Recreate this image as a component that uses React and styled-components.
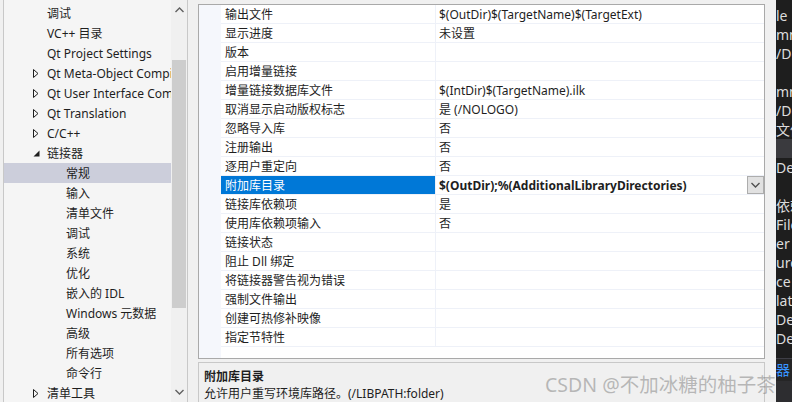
import * as React from 'react'
import styled, { createGlobalStyle } from 'styled-components'

const GlobalStyle = createGlobalStyle`
html, body { margin: 0; padding: 0; background: #f0f0f0; }
body {
  font-family: "Noto Sans", "Noto Sans CJK SC", sans-serif;
  font-size: 12px;
  color: #1e1e1e;
}
`

const Page = styled.div`
position: relative;
display: flex;
width: 792px;
height: 402px;
overflow: hidden;
background: #f0f0f0;
`

const TreePanel = styled.div`
display: flex;
margin-left: 3px;
width: 183px;
border-left: 1px solid #c8c8c8;
border-right: 1px solid #c8c8c8;
background: #f5f5f5;
`

const TreeList = styled.div`
flex: 1;
min-width: 0;
padding-top: 3px;
overflow: hidden;
`

const TreeRow = styled.div`
display: flex;
align-items: center;
height: 20px;
padding-left: ${p => (p.$level === 2 ? 62 : 29)}px;
background: ${p => (p.$selected ? '#cccedb' : 'transparent')};
white-space: nowrap;
`

const Arrow = styled.span`
display: inline-flex;
flex-shrink: 0;
width: 14px;
align-items: center;
`

const Scrollbar = styled.div`
display: flex;
flex-direction: column;
flex-shrink: 0;
width: 16px;
background: #f0f0f0;
`

const ScrollBtn = styled.div`
height: 20px;
display: flex;
align-items: center;
justify-content: center;
`

const Track = styled.div`
flex: 1;
padding: 40px 1px 74px 1px;
display: flex;
`

const Thumb = styled.div`
flex: 1;
background: #cdcdcd;
`

const Main = styled.div`
display: flex;
flex-direction: column;
margin-left: 10px;
width: 567px;
`

const Grid = styled.div`
display: flex;
margin-top: 4px;
height: 356px;
border: 1px solid #a9a9a9;
background: #ffffff;
`

const Gutter = styled.div`
width: 22px;
background: #f5f7fc;
`

const Rows = styled.div`
flex: 1;
display: flex;
flex-direction: column;
`

const Row = styled.div`
display: grid;
grid-template-columns: 214px 1fr;
height: 19px;
box-sizing: border-box;
border-bottom: 1px solid #eef1f8;
`

const NameCell = styled.div`
display: flex;
align-items: center;
padding-left: 4px;
background: ${p => (p.$selected ? '#0078d7' : 'transparent')};
color: ${p => (p.$selected ? '#ffffff' : 'inherit')};
white-space: nowrap;
overflow: hidden;
`

const ValueCell = styled.div`
display: flex;
align-items: center;
padding-left: 3px;
border-left: 1px solid #eef1f8;
font-weight: ${p => (p.$bold ? 700 : 400)};
white-space: nowrap;
overflow: hidden;
`

const ValueText = styled.span`
flex: 1;
`

const DropBtn = styled.div`
width: 15px;
height: 16px;
border: 1px solid #adadad;
background: #e1e1e1;
display: flex;
align-items: center;
justify-content: center;
`

const Desc = styled.div`
margin-top: 3px;
flex: 1;
border: 1px solid #c8c8c8;
border-bottom: none;
padding: 5px 5px 0;
line-height: 17px;
`

const DescTitle = styled.div`
font-weight: 700;
`

const Dark = styled.div`
margin-left: 11px;
flex: 1;
min-width: 0;
background: #1e1e1e;
color: #dcdcdc;
font-size: 14px;
display: flex;
flex-direction: column;
padding-top: 6px;
overflow: hidden;
`

const DarkRow = styled.div`
flex-shrink: 0;
height: 19px;
line-height: 19px;
white-space: nowrap;
background: ${p => (p.$band ? '#3a3a3e' : 'transparent')};
`

const DarkFoot = styled.div`
flex-shrink: 0;
margin-top: 10px;
border-top: 1px solid #3f3f46;
height: 22px;
line-height: 22px;
white-space: nowrap;
color: #3794ff;
background: #252526;
`

const DarkBar = styled.div`
flex: 1;
background: #2d2d30;
`

const Watermark = styled.div`
position: absolute;
left: 545px;
top: 369px;
font-size: 19.5px;
color: rgba(125, 125, 125, 0.5);
white-space: nowrap;
pointer-events: none;
`

const Closed = () => (
  <svg width="6" height="9" viewBox="0 0 6 9">
    <path d="M0.5 0.5 L5 4.5 L0.5 8.5 Z" fill="none" stroke="#1e1e1e" strokeWidth="1" />
  </svg>
)

const Open = () => (
  <svg width="7" height="7" viewBox="0 0 7 7">
    <path d="M6.5 0.5 L6.5 6.5 L0.5 6.5 Z" fill="#1e1e1e" />
  </svg>
)

const Chevron = ({ up, color = '#606060' }) => (
  <svg width="9" height="6" viewBox="0 0 9 6">
    <path d={up ? 'M0.5 5 L4.5 1 L8.5 5' : 'M0.5 1 L4.5 5 L8.5 1'} fill="none" stroke={color} strokeWidth="1.4" />
  </svg>
)

const tree = [
  { label: '调试', level: 1 },
  { label: 'VC++ 目录', level: 1 },
  { label: 'Qt Project Settings', level: 1 },
  { label: 'Qt Meta-Object Compiler', level: 1, arrow: 'closed' },
  { label: 'Qt User Interface Compiler', level: 1, arrow: 'closed' },
  { label: 'Qt Translation', level: 1, arrow: 'closed' },
  { label: 'C/C++', level: 1, arrow: 'closed' },
  { label: '链接器', level: 1, arrow: 'open' },
  { label: '常规', level: 2, selected: true },
  { label: '输入', level: 2 },
  { label: '清单文件', level: 2 },
  { label: '调试', level: 2 },
  { label: '系统', level: 2 },
  { label: '优化', level: 2 },
  { label: '嵌入的 IDL', level: 2 },
  { label: 'Windows 元数据', level: 2 },
  { label: '高级', level: 2 },
  { label: '所有选项', level: 2 },
  { label: '命令行', level: 2 },
  { label: '清单工具', level: 1, arrow: 'closed' },
]

const props = [
  ['输出文件', '$(OutDir)$(TargetName)$(TargetExt)'],
  ['显示进度', '未设置'],
  ['版本', ''],
  ['启用增量链接', ''],
  ['增量链接数据库文件', '$(IntDir)$(TargetName).ilk'],
  ['取消显示启动版权标志', '是 (/NOLOGO)'],
  ['忽略导入库', '否'],
  ['注册输出', '否'],
  ['逐用户重定向', '否'],
  ['附加库目录', '$(OutDir);%(AdditionalLibraryDirectories)', true],
  ['链接库依赖项', '是'],
  ['使用库依赖项输入', '否'],
  ['链接状态', ''],
  ['阻止 Dll 绑定', ''],
  ['将链接器警告视为错误', ''],
  ['强制文件输出', ''],
  ['创建可热修补映像', ''],
  ['指定节特性', ''],
]

const darkLines = ['le', 'mm', '/De', '', 'mm', '/De', '文件', '', 'De', '', '依赖', 'File', 'er', 'urc', 'ce F', 'lati', 'De', 'De']

const App = () => (
  <Page>
    <GlobalStyle />
    <TreePanel>
      <TreeList>
        {tree.map((t, i) => (
          <TreeRow key={i} $level={t.level} $selected={t.selected}>
            {t.level === 1 && <Arrow>{t.arrow === 'closed' ? <Closed /> : t.arrow === 'open' ? <Open /> : null}</Arrow>}
            {t.label}
          </TreeRow>
        ))}
      </TreeList>
      <Scrollbar>
        <ScrollBtn><Chevron up /></ScrollBtn>
        <Track><Thumb /></Track>
        <ScrollBtn><Chevron /></ScrollBtn>
      </Scrollbar>
    </TreePanel>
    <Main>
      <Grid>
        <Gutter />
        <Rows>
          {props.map(([name, value, sel], i) => (
            <Row key={i}>
              <NameCell $selected={sel}>{name}</NameCell>
              <ValueCell $bold={sel}>
                <ValueText>{value}</ValueText>
                {sel && <DropBtn><Chevron color="#505050" /></DropBtn>}
              </ValueCell>
            </Row>
          ))}
        </Rows>
      </Grid>
      <Desc>
        <DescTitle>附加库目录</DescTitle>
        <div>允许用户重写环境库路径。(/LIBPATH:folder)</div>
      </Desc>
    </Main>
    <Dark>
      {darkLines.map((l, i) => (
        <DarkRow key={i} $band={i === 7}>{l}</DarkRow>
      ))}
      <DarkFoot>器</DarkFoot>
      <DarkBar />
    </Dark>
    <Watermark>CSDN @不加冰糖的柚子茶</Watermark>
  </Page>
)

export default App
